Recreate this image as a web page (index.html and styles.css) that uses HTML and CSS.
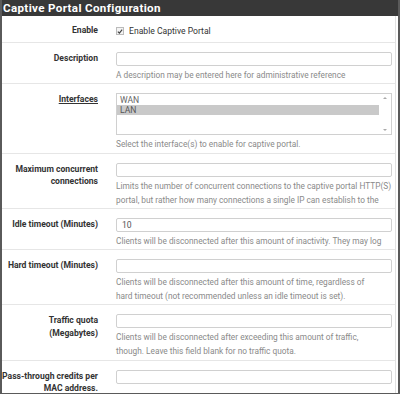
FILE: index.html
```html
<!DOCTYPE html>
<html lang="en">
<head>
    <meta charset="UTF-8">
    <title>Captive Portal Configuration</title>
    <link rel="stylesheet" href="styles.css">
</head>
<body>
    <div class="panel">
        <div class="panel-heading">Captive Portal Configuration</div>
        <div class="panel-body">

            <div class="form-row row-enable">
                <div class="form-label">Enable</div>
                <div class="form-field">
                    <label class="check">
                        <span class="check-box">
                            <svg width="7" height="7" viewBox="0 0 7 7"><path d="M1 3.6 L2.8 5.4 L6 1.4" fill="none" stroke="#444" stroke-width="1.4"/></svg>
                        </span>
                        Enable Captive Portal
                    </label>
                </div>
            </div>

            <div class="form-row">
                <div class="form-label">Description</div>
                <div class="form-field">
                    <div class="text-input"></div>
                    <div class="help">A description may be entered here for administrative reference</div>
                </div>
            </div>

            <div class="form-row">
                <div class="form-label"><span class="underline">Interfaces</span></div>
                <div class="form-field">
                    <div class="listbox">
                        <div class="options">
                            <div class="option">WAN</div>
                            <div class="option selected">LAN</div>
                        </div>
                        <div class="scrollbar">
                            <span class="arrow up"></span>
                            <span class="arrow down"></span>
                        </div>
                    </div>
                    <div class="help">Select the interface(s) to enable for captive portal.</div>
                </div>
            </div>

            <div class="form-row">
                <div class="form-label">Maximum concurrent<br>connections</div>
                <div class="form-field">
                    <div class="text-input"></div>
                    <div class="help">Limits the number of concurrent connections to the captive portal HTTP(S)<br>portal, but rather how many connections a single IP can establish to the</div>
                </div>
            </div>

            <div class="form-row">
                <div class="form-label">Idle timeout (Minutes)</div>
                <div class="form-field">
                    <div class="text-input">10</div>
                    <div class="help">Clients will be disconnected after this amount of inactivity. They may log</div>
                </div>
            </div>

            <div class="form-row">
                <div class="form-label">Hard timeout (Minutes)</div>
                <div class="form-field">
                    <div class="text-input"></div>
                    <div class="help">Clients will be disconnected after this amount of time, regardless of<br>hard timeout (not recommended unless an idle timeout is set).</div>
                </div>
            </div>

            <div class="form-row">
                <div class="form-label">Traffic quota<br>(Megabytes)</div>
                <div class="form-field">
                    <div class="text-input"></div>
                    <div class="help">Clients will be disconnected after exceeding this amount of traffic,<br>though. Leave this field blank for no traffic quota.</div>
                </div>
            </div>

            <div class="form-row">
                <div class="form-label">Pass-through credits per<br>MAC address.</div>
                <div class="form-field">
                    <div class="text-input"></div>
                </div>
            </div>

        </div>
    </div>
</body>
</html>
```

FILE: styles.css
```css
body {
    margin: 0;
    background-color: #ffffff;
    font-family: Roboto, "Noto Sans", Arial, sans-serif;
    color: #333;
    width: 400px;
    height: 395px;
    overflow: hidden;
}

.panel {
    height: 394px;
    border-left: 2px solid #5a5a5a;
    border-right: 2px solid #5a5a5a;
    border-bottom: 1px solid #5a5a5a;
    box-sizing: border-box;
    overflow: hidden;
}

.panel-heading {
    height: 16px;
    margin-left: -2px;
    margin-right: -2px;
    padding-left: 3px;
    background-color: #383838;
    color: #ffffff;
    font-size: 11.6px;
    font-weight: bold;
    line-height: 16px;
    letter-spacing: 0.35px;
}

.panel-body {
    border-right: 1px solid #e2e2e2;
    margin-right: 2px;
    height: 100%;
}

.form-row {
    display: grid;
    grid-template-columns: 96px 1fr;
    column-gap: 18px;
    padding: 9px 3px 1.3px 0;
    border-bottom: 1px solid #e6e6e6;
}

.row-enable {
    padding-top: 8px;
    padding-bottom: 4px;
}

.form-label {
    text-align: right;
    font-size: 8.6px;
    font-weight: bold;
    line-height: 12.5px;
    padding-top: 0;
    color: #333;
}

.underline {
    text-decoration: underline;
}

.form-field {
    min-width: 0;
}

.check {
    display: flex;
    align-items: center;
    gap: 5px;
    font-size: 8.6px;
    line-height: 14px;
    color: #333;
}

.check-box {
    display: inline-flex;
    align-items: center;
    justify-content: center;
    width: 6px;
    height: 6px;
    border: 1px solid #bbb;
    background-color: #f4f4f4;
}

.text-input {
    height: 14px;
    border: 1px solid #d0d0d0;
    border-radius: 2px;
    box-sizing: border-box;
    font-size: 8.6px;
    line-height: 12px;
    padding-left: 5px;
    color: #555;
}

.help {
    margin-top: 2px;
    font-size: 8.3px;
    line-height: 14px;
    color: #8a8a8a;
    white-space: nowrap;
}

.listbox {
    display: flex;
    height: 42px;
    border: 1px solid #d0d0d0;
    box-sizing: border-box;
}

.options {
    flex: 1;
    padding-top: 1px;
}

.option {
    font-size: 8.6px;
    line-height: 10px;
    padding-left: 3px;
    color: #666;
}

.option.selected {
    background-color: #c9c9c9;
    color: #555;
}

.scrollbar {
    width: 12px;
    display: flex;
    flex-direction: column;
    justify-content: space-between;
    align-items: center;
    padding: 3px 0;
}

.arrow {
    width: 0;
    height: 0;
    border-left: 2px solid transparent;
    border-right: 2px solid transparent;
}

.arrow.up {
    border-bottom: 2px solid #aaa;
}

.arrow.down {
    border-top: 2px solid #aaa;
}
```
